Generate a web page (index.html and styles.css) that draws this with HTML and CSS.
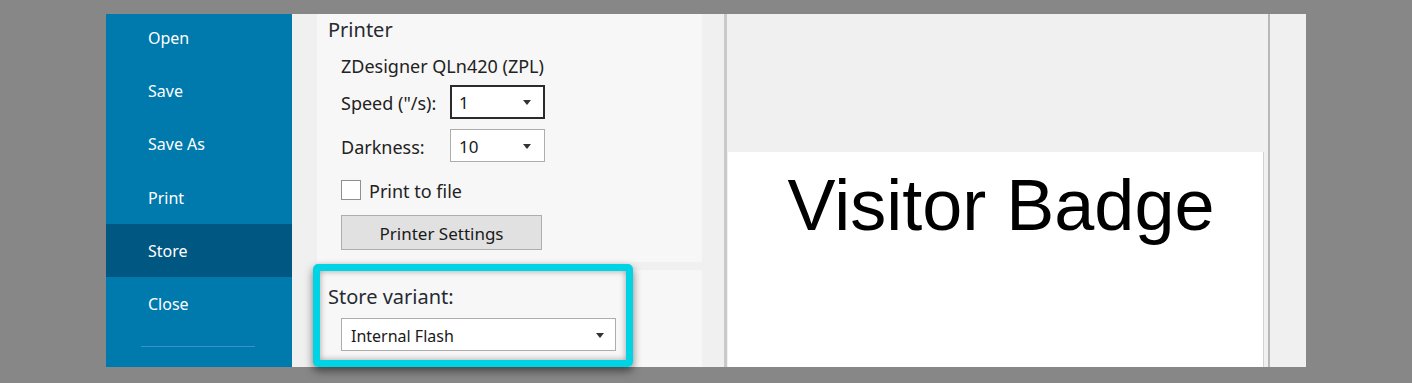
FILE: index.html
```html
<!DOCTYPE html>
<html lang="en">
<head>
<meta charset="utf-8">
<title>Store</title>
<link rel="stylesheet" href="styles.css">
</head>
<body>
<div class="window">
  <nav class="sidebar">
    <ul class="menu">
      <li class="menu-item">Open</li>
      <li class="menu-item">Save</li>
      <li class="menu-item">Save As</li>
      <li class="menu-item">Print</li>
      <li class="menu-item active">Store</li>
      <li class="menu-item">Close</li>
    </ul>
    <div class="menu-sep"></div>
  </nav>

  <section class="settings">
    <div class="card card-printer">
      <h2 class="card-title">Printer</h2>
      <div class="printer-name">ZDesigner QLn420 (ZPL)</div>
      <div class="field-row row-speed">
        <span class="field-label">Speed ("/s):</span>
        <div class="select select-small select-focused"><span>1</span><span class="caret"></span></div>
      </div>
      <div class="field-row row-darkness">
        <span class="field-label">Darkness:</span>
        <div class="select select-small"><span>10</span><span class="caret"></span></div>
      </div>
      <label class="check-row">
        <span class="checkbox"></span>
        <span class="check-label">Print to file</span>
      </label>
      <div class="button">Printer Settings</div>
    </div>

    <div class="card card-store">
      <div class="highlight"></div>
      <h2 class="card-title">Store variant:</h2>
      <div class="select select-wide"><span>Internal Flash</span><span class="caret"></span></div>
    </div>
  </section>

  <div class="divider"></div>

  <section class="preview">
    <div class="canvas">
      <div class="badge">
        <div class="badge-title">Visitor Badge</div>
      </div>
    </div>
    <div class="vline"></div>
    <div class="gutter"></div>
  </section>
</div>
</body>
</html>
```
FILE: styles.css
```css
* { box-sizing: border-box; }

html, body {
  margin: 0;
  padding: 0;
}

body {
  width: 1412px;
  height: 383px;
  background: #878787;
  overflow: hidden;
  font-family: "Noto Sans", "Open Sans", sans-serif;
  color: #222222;
}

.window {
  margin: 14px 0 0 106px;
  width: 1200px;
  height: 353px;
  display: flex;
  background: #f0f0f0;
}

/* Sidebar */
.sidebar {
  width: 186px;
  flex: none;
  background: #0079ad;
  overflow: hidden;
}

.menu {
  list-style: none;
  margin: -3.7px 0 0;
  padding: 0;
}

.menu-item {
  height: 53.4px;
  display: flex;
  align-items: center;
  padding: 1px 0 0 42px;
  font-size: 16px;
  color: #ffffff;
}

.menu-item.active {
  background: #005781;
}

.menu-sep {
  margin: 15px 0 0 35px;
  width: 114px;
  height: 1px;
  background: #3a8fd4;
}

/* Settings column */
.settings {
  width: 432px;
  flex: none;
  padding-left: 25px;
  display: flex;
  flex-direction: column;
  gap: 8px;
  background: #f0f0f0;
}

.card {
  width: 385px;
  background: #f7f7f7;
  display: flex;
  flex-direction: column;
  align-items: flex-start;
}

.card-printer {
  padding: 4px 0 12px 24px;
}

.card-title {
  margin: 0 0 0 -13px;
  height: 24px;
  line-height: 24px;
  font-size: 20px;
  font-weight: 400;
  color: #262a33;
}

.printer-name {
  margin-top: 13px;
  height: 22px;
  line-height: 22px;
  font-size: 18px;
}

.field-row {
  display: flex;
  align-items: center;
}

.row-speed {
  margin-top: 8px;
  height: 34px;
}

.row-darkness {
  margin-top: 10px;
  height: 33px;
}

.field-label {
  width: 109px;
  font-size: 18px;
  line-height: 22px;
  padding-top: 2px;
}

.select {
  display: flex;
  align-items: center;
  justify-content: space-between;
  background: #ffffff;
  border: 1px solid #adadad;
  font-size: 17px;
  color: #1a1a1a;
  padding: 1px 13px 0 8px;
}

.select-small {
  width: 95px;
  height: 33px;
}

.select-focused {
  height: 34px;
  border: 2px solid #2b2b2b;
  padding-left: 7px;
  padding-right: 12px;
}

.caret {
  width: 0;
  height: 0;
  border-left: 4px solid transparent;
  border-right: 4px solid transparent;
  border-top: 5px solid #333333;
}

.check-row {
  margin-top: 18px;
  height: 20px;
  display: flex;
  align-items: center;
  gap: 8px;
}

.checkbox {
  width: 20px;
  height: 20px;
  background: #ffffff;
  border: 1px solid #8f8f8f;
}

.check-label {
  font-size: 18px;
  line-height: 22px;
  padding-top: 2px;
}

.button {
  margin-top: 15px;
  width: 201px;
  height: 35px;
  background: #e1e1e1;
  border: 1px solid #adadad;
  display: flex;
  align-items: center;
  justify-content: center;
  padding-top: 2px;
  font-size: 17px;
  color: #1a1a1a;
}

.card-store {
  flex: 1;
  position: relative;
  padding: 15px 0 16px 24px;
}

.card-store .select-wide {
  margin-top: 9px;
}

.select-wide {
  width: 275px;
  height: 33px;
  font-size: 16px;
  padding: 2px 11px 0 9px;
}

.highlight {
  position: absolute;
  left: -4px;
  top: -6px;
  width: 320px;
  height: 103px;
  border: 7px solid #00d3e3;
  border-radius: 5px;
  box-shadow: 0 4px 8px rgba(0, 0, 0, 0.5), inset 0 0 6px rgba(0, 0, 0, 0.35);
  pointer-events: none;
  z-index: 2;
}

/* Divider */
.divider {
  width: 3px;
  flex: none;
  background: #c9c9c9;
}

/* Preview */
.preview {
  flex: 1;
  display: flex;
  background: #f0f0f0;
}

.canvas {
  width: 541px;
  flex: none;
  padding: 138px 0 0 1px;
  display: flex;
}

.badge {
  width: 536px;
  background: #ffffff;
  border-right: 1px solid #d2d2d2;
  padding-top: 17px;
}

.badge-title {
  text-align: center;
  font-family: "Liberation Sans", Arial, sans-serif;
  font-size: 72px;
  line-height: 72px;
  color: #000000;
  padding-left: 11px;
}

.vline {
  width: 2px;
  flex: none;
  background: #b8b8b8;
}

.gutter {
  flex: 1;
  background: #f0f0f0;
}
```
